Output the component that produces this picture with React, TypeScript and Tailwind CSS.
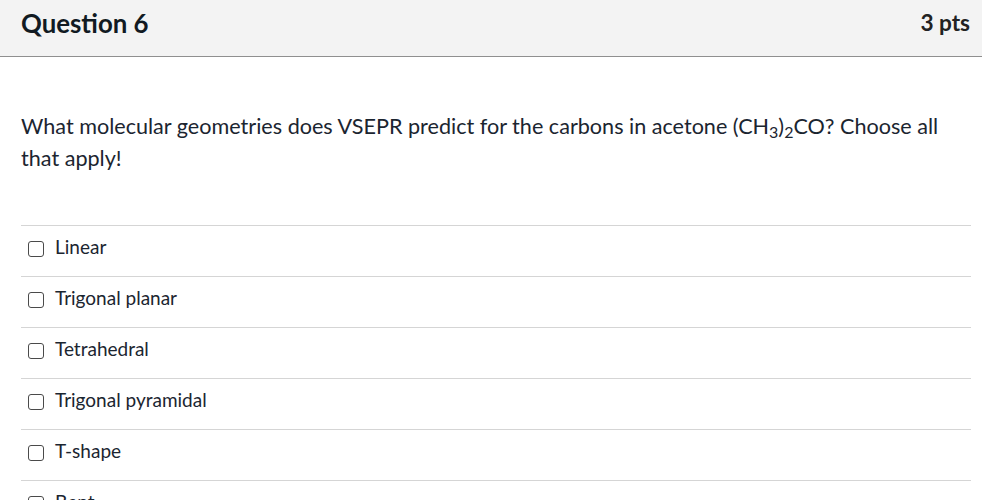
import React from "react";

const options = ["Linear", "Trigonal planar", "Tetrahedral", "Trigonal pyramidal", "T-shape", "Bent"];

export default function App() {
  return (
    <div className="w-[982px] h-[500px] overflow-hidden bg-white text-[#2d3b45]" style={{ fontFamily: "Lato, 'Noto Sans', sans-serif" }}>
      <div className="h-[57px] bg-[#f3f3f3] border-b border-[#8f8f8f] flex items-center justify-between pl-[21px] pr-[12px]">
        <div className="text-[25.8px] font-bold text-[#111a22] pb-[10px]">Question 6</div>
        <div className="text-[22.6px] font-bold text-[#222] pb-[10px]">3 pts</div>
      </div>
      <div className="px-[21px] pr-[11px]">
        <p className="mt-[53px] text-[21.6px] leading-[32px] text-[#1b2530]">
          What molecular geometries does VSEPR predict for the carbons in acetone (CH
          <sub className="text-[16px]">3</sub>)<sub className="text-[16px]">2</sub>CO? Choose all that apply!
        </p>
        <div className="mt-[51px]">
          {options.map((o) => (
            <div key={o} className="h-[51px] border-t border-[#d5d5d5] flex items-center pl-[7px]">
              <span className="w-[16px] h-[16px] rounded-[3px] border-[1.5px] border-[#4a4a4a] bg-white shrink-0 -mt-[4px]" />
              <span className="ml-[11px] text-[19px] text-[#1b2530] -mt-[7px]">{o}</span>
            </div>
          ))}
        </div>
      </div>
    </div>
  );
}
